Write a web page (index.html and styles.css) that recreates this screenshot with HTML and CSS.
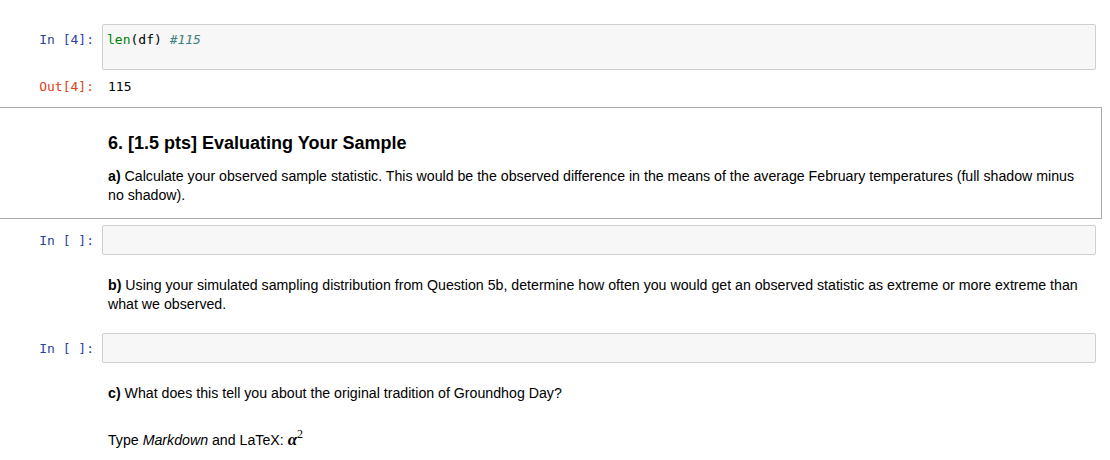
FILE: index.html
```html
<!DOCTYPE html>
<html>
<head>
<meta charset="utf-8">
<link rel="stylesheet" href="styles.css">
</head>
<body>
<div class="notebook">
  <div class="cell code-cell">
    <div class="row">
      <div class="prompt in">In&nbsp;[4]:</div>
      <div class="input tall"><span class="kw">len</span>(df) <span class="cm">#115</span></div>
    </div>
    <div class="row out-row">
      <div class="prompt out">Out[4]:</div>
      <div class="output">115</div>
    </div>
  </div>

  <div class="cell md-cell selected">
    <div class="row">
      <div class="prompt"></div>
      <div class="md">
        <h3>6. [1.5 pts] Evaluating Your Sample</h3>
        <p><b>a)</b> Calculate your observed sample statistic. This would be the observed difference in the means of the average February temperatures (full shadow minus no shadow).</p>
      </div>
    </div>
  </div>

  <div class="cell code-cell">
    <div class="row">
      <div class="prompt in">In&nbsp;[&nbsp;]:</div>
      <div class="input"></div>
    </div>
  </div>

  <div class="cell md-cell">
    <div class="row">
      <div class="prompt"></div>
      <div class="md">
        <p><b>b)</b> Using your simulated sampling distribution from Question 5b, determine how often you would get an observed statistic as extreme or more extreme than what we observed.</p>
      </div>
    </div>
  </div>

  <div class="cell code-cell">
    <div class="row">
      <div class="prompt in">In&nbsp;[&nbsp;]:</div>
      <div class="input"></div>
    </div>
  </div>

  <div class="cell md-cell">
    <div class="row">
      <div class="prompt"></div>
      <div class="md">
        <p><b>c)</b> What does this tell you about the original tradition of Groundhog Day?</p>
      </div>
    </div>
  </div>

  <div class="cell md-cell">
    <div class="row">
      <div class="prompt"></div>
      <div class="md">
        <p>Type <i>Markdown</i> and LaTeX: <span class="math">α<sup>2</sup></span></p>
      </div>
    </div>
  </div>
</div>
</body>
</html>
```

FILE: styles.css
```css
html, body {
  margin: 0;
  padding: 0;
  background: #ffffff;
}
body {
  font-family: "Liberation Sans", Arial, sans-serif;
  font-size: 14.18px;
  color: #000000;
}
.notebook {
  width: 1104px;
  margin-left: -2px;
  padding-top: 18px;
}
.cell {
  border: 1px solid transparent;
  padding: 5px;
}
.cell.selected {
  border-color: #ababab;
}
.row {
  display: flex;
  align-items: flex-start;
}
.prompt {
  flex: 0 0 98px;
  box-sizing: border-box;
  padding-right: 8px;
  text-align: right;
  font-family: "DejaVu Sans Mono", "Liberation Mono", monospace;
  font-size: 13px;
  line-height: 17px;
}
.prompt.in {
  color: #303f9f;
  padding-top: 7px;
}
.prompt.out {
  color: #d84315;
}
.input {
  flex: 1;
  height: 28px;
  box-sizing: content-box;
  background: #f7f7f7;
  border: 1px solid #cfcfcf;
  border-radius: 2px;
  padding: 0 4px;
  font-family: "DejaVu Sans Mono", "Liberation Mono", monospace;
  font-size: 13px;
  line-height: 17px;
}
.input.tall {
  height: 38px;
  padding-top: 6px;
}
.kw {
  color: #008000;
}
.cm {
  color: #408080;
  font-style: italic;
}
.out-row {
  padding-top: 8px;
  padding-bottom: 6px;
}
.output {
  flex: 1;
  padding-left: 6px;
  font-family: "DejaVu Sans Mono", "Liberation Mono", monospace;
  font-size: 13px;
  line-height: 17px;
}
.md {
  flex: 1;
  padding: 9px 6px 7px 6px;
  line-height: 19px;
}
.selected .md {
  padding-bottom: 8px;
}
.md h3 {
  margin: 10px 0 13px 0;
  font-size: 18px;
  line-height: 22px;
  font-weight: bold;
}
.md p {
  margin: 0;
}
.math {
  font-family: "Liberation Serif", "DejaVu Serif", serif;
  font-weight: bold;
  font-style: italic;
  font-size: 17px;
  line-height: 0;
}
.math sup {
  font-style: normal;
  font-weight: normal;
  font-size: 12px;
  vertical-align: 7px;
  line-height: 0;
}
```
